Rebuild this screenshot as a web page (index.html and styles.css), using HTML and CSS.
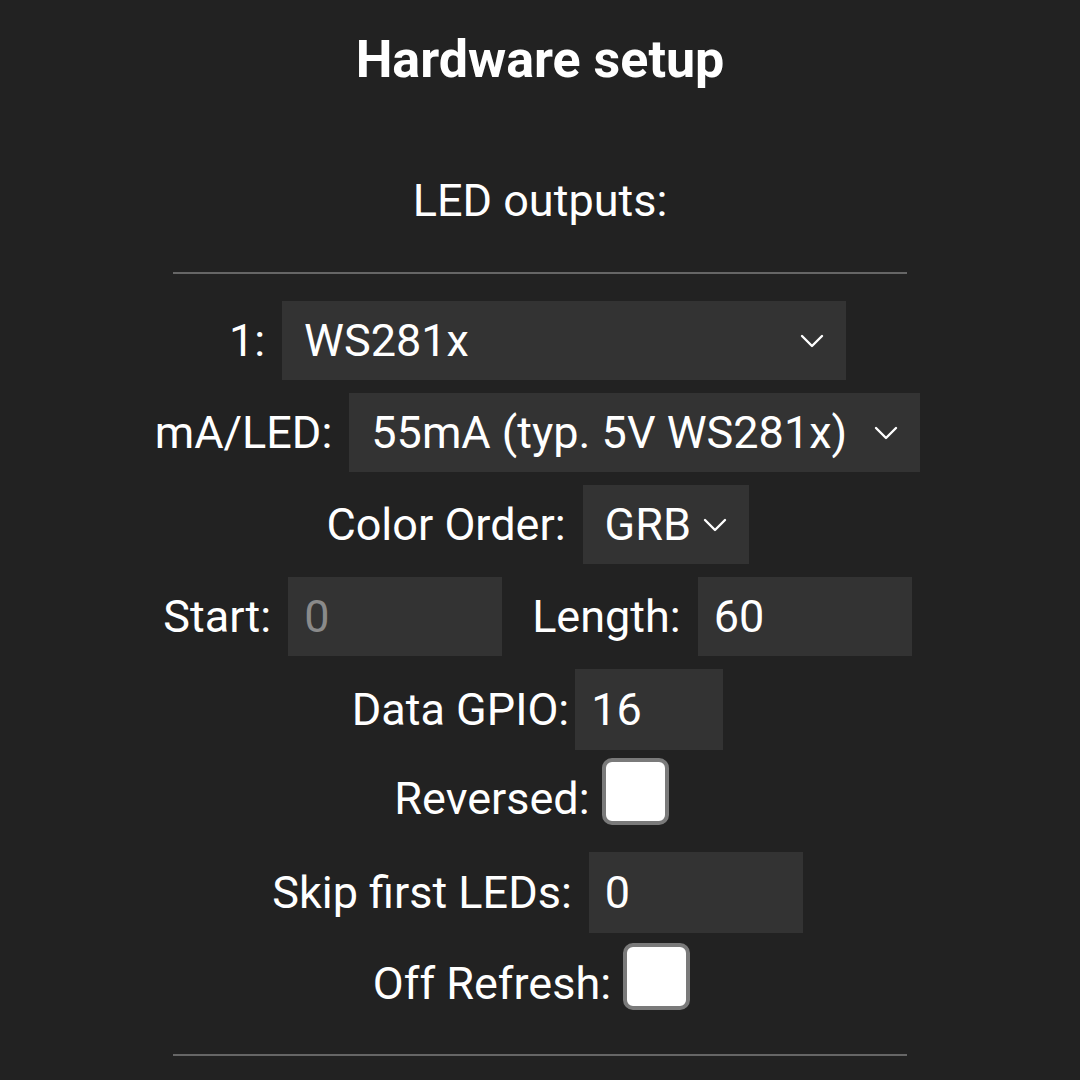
FILE: index.html
```html
<!DOCTYPE html>
<html lang="en">
<head>
<meta charset="utf-8">
<title>Hardware setup</title>
<link rel="stylesheet" href="styles.css">
</head>
<body>
<main class="page">
  <h2 class="title">Hardware setup</h2>
  <p class="section">LED outputs:</p>
  <hr class="rule rule-top">
  <div class="form">
    <div class="row">
      <span class="label">1:</span>
      <div class="select w-type"><span>WS281x</span><svg class="chev" viewBox="0 0 24 14" width="24" height="14"><path d="M2 2 L12 12 L22 2"/></svg></div>
    </div>
    <div class="row">
      <span class="label">mA/LED:</span>
      <div class="select w-ma"><span>55mA (typ. 5V WS281x)</span><svg class="chev" viewBox="0 0 24 14" width="24" height="14"><path d="M2 2 L12 12 L22 2"/></svg></div>
    </div>
    <div class="row">
      <span class="label">Color Order:</span>
      <div class="select w-co"><span>GRB</span><svg class="chev" viewBox="0 0 24 14" width="24" height="14"><path d="M2 2 L12 12 L22 2"/></svg></div>
    </div>
    <div class="row">
      <span class="label">Start:</span>
      <input class="field w-num" type="text" value="0" disabled>
      <span class="label label-after">Length:</span>
      <input class="field w-num" type="text" value="60">
    </div>
    <div class="row row-tight">
      <span class="label">Data GPIO:</span>
      <input class="field w-gpio tall" type="text" value="16">
    </div>
    <div class="row row-check row-rev">
      <span class="label">Reversed:</span>
      <input class="check" type="checkbox">
    </div>
    <div class="row row-skip">
      <span class="label">Skip first LEDs:</span>
      <input class="field w-num tall" type="text" value="0">
    </div>
    <div class="row row-check row-off">
      <span class="label">Off Refresh:</span>
      <input class="check" type="checkbox">
    </div>
  </div>
  <hr class="rule rule-bottom">
</main>
</body>
</html>
```
FILE: styles.css
```css
html, body {
  margin: 0;
  padding: 0;
  background: #222222;
}

body {
  color: #ffffff;
  font-family: Roboto, "Noto Sans", "Liberation Sans", sans-serif;
  font-size: 45px;
  line-height: 52px;
}

.page {
  display: flex;
  flex-direction: column;
  align-items: center;
  width: 1080px;
  height: 1080px;
  overflow: hidden;
}

.title {
  margin: 29px 0 0 0;
  font-size: 52px;
  line-height: 61px;
  font-weight: 700;
}

.section {
  margin: 85px 0 0 0;
}

.rule {
  width: 734px;
  height: 0;
  margin: 0;
  border: none;
  border-top: 2px solid #666666;
}

.rule-top {
  margin-top: 45px;
}

.rule-bottom {
  margin-top: 44px;
}

.form {
  display: flex;
  flex-direction: column;
  align-items: center;
  gap: 13px;
  margin-top: 27px;
  padding-right: 5px;
}

.row {
  display: flex;
  align-items: center;
  gap: 17px;
}

.row-tight {
  gap: 6px;
}

.row-check {
  align-items: flex-end;
  gap: 12px;
  margin-right: 12px;
}

.row-rev {
  margin-top: -5px;
}

.row-skip {
  margin-top: 14px;
}

.row-off {
  margin-top: -3px;
}

.label {
  white-space: nowrap;
}

.label-after {
  margin-left: 13px;
}

.select {
  display: flex;
  align-items: center;
  justify-content: space-between;
  box-sizing: border-box;
  height: 79px;
  padding: 0 22px 0 22px;
  background: #333333;
  white-space: nowrap;
}

.chev {
  flex: none;
  fill: none;
  stroke: #ffffff;
  stroke-width: 2.4;
  stroke-linecap: round;
  stroke-linejoin: round;
}

.w-type { width: 564px; }
.w-ma { width: 571px; }
.w-co { width: 166px; }

.field {
  box-sizing: border-box;
  height: 79px;
  margin: 0;
  padding: 0 16px;
  border: none;
  outline: none;
  background: #333333;
  color: #ffffff;
  font-family: inherit;
  font-size: 45px;
}

.field.tall {
  height: 81px;
}

.field:disabled {
  color: #8a8a8a;
  background: #333333;
}

.w-num { width: 214px; }
.w-gpio { width: 148px; }

.check {
  appearance: none;
  -webkit-appearance: none;
  box-sizing: border-box;
  width: 67px;
  height: 67px;
  margin: 0;
  border: 4px solid #7a7a7a;
  border-radius: 10px;
  background: #ffffff;
}
```
